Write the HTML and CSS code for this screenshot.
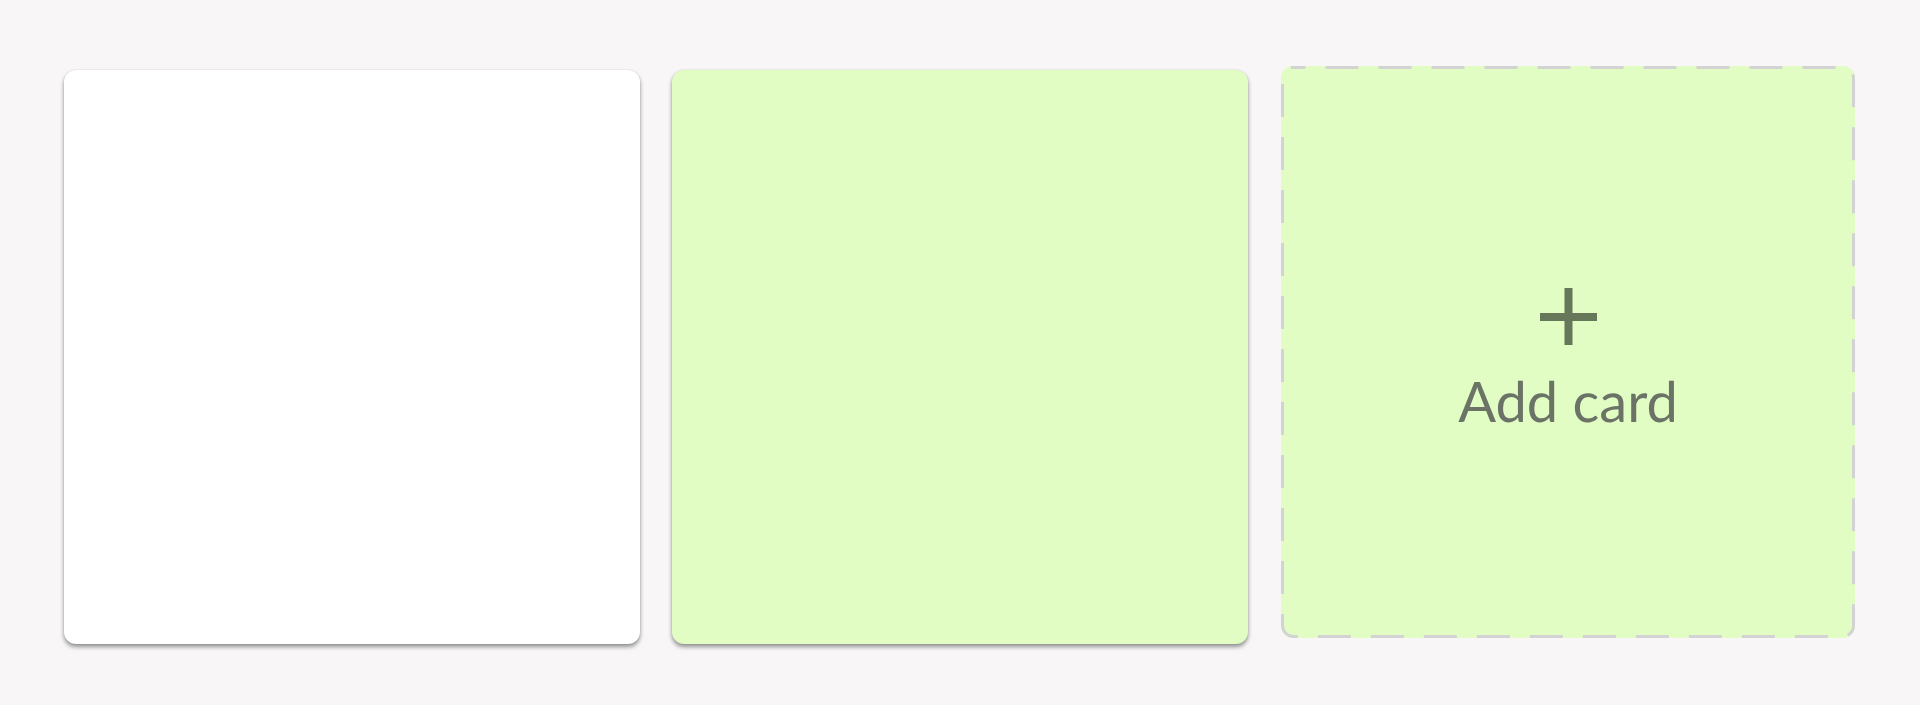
FILE: index.html
```html
<!DOCTYPE html>
<html lang="en">
<head>
<meta charset="utf-8">
<title>Cards</title>
<link rel="stylesheet" href="styles.css">
</head>
<body>
<main class="board">
  <div class="card card-white"></div>
  <div class="card card-green"></div>
  <button class="card-add" type="button">
    <svg class="dash-frame" width="574" height="572" viewBox="0 0 574 572" aria-hidden="true">
      <rect x="1.5" y="1.5" width="571" height="569" rx="11" ry="11" fill="none" stroke="#d3d3d3" stroke-width="3" stroke-dasharray="33 20" stroke-dashoffset="21"/>
    </svg>
    <svg class="plus" width="57" height="57" viewBox="0 0 57 57" aria-hidden="true">
      <rect x="24.5" y="0" width="8" height="57" fill="#67775a"/>
      <rect x="0" y="25" width="57" height="8" fill="#67775a"/>
    </svg>
    <span class="add-label">Add card</span>
  </button>
</main>
</body>
</html>
```

FILE: styles.css
```css
html, body {
  margin: 0;
  padding: 0;
  background: #f8f6f7;
  height: 100%;
}

body {
  font-family: Lato, "Noto Sans", sans-serif;
}

.board {
  display: grid;
  grid-template-columns: repeat(3, 576px);
  column-gap: 32px;
  padding: 66px 64px 0 64px;
  align-items: start;
}

.card {
  margin-top: 4px;
  height: 574px;
  border-radius: 12px;
  box-shadow: 0 0 2px rgba(0, 0, 0, 0.12), 0 3px 4px rgba(0, 0, 0, 0.4);
}

.card-white {
  background: #ffffff;
}

.card-green {
  background: #e1fdc3;
}

.card-add {
  position: relative;
  margin: 0 1px;
  height: 572px;
  box-sizing: border-box;
  background: #e1fdc3;
  border: 0;
  border-radius: 12px;
  display: flex;
  flex-direction: column;
  align-items: center;
  justify-content: center;
  gap: 28px;
  padding: 12px 0 0 0;
  font: inherit;
  cursor: pointer;
}

.dash-frame {
  position: absolute;
  top: 0;
  left: 0;
  display: block;
}

.plus {
  display: block;
}

.add-label {
  font-family: Lato, "Noto Sans", sans-serif;
  font-size: 56px;
  line-height: 1;
  color: #6b7367;
  text-rendering: geometricPrecision;
}
```
